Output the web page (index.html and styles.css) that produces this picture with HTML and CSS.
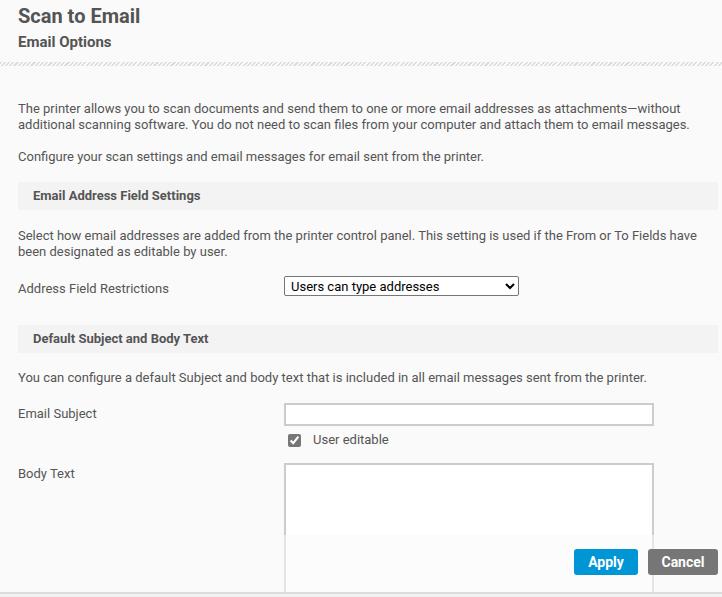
FILE: index.html
```html
<!DOCTYPE html>
<html lang="en">
<head>
<meta charset="utf-8">
<title>Scan to Email</title>
<link rel="stylesheet" href="styles.css">
</head>
<body>
<header class="page-head">
  <h1 class="page-title">Scan to Email</h1>
  <h2 class="page-subtitle">Email Options</h2>
</header>
<div class="hatch"></div>
<main class="content">
  <p class="text">The printer allows you to scan documents and send them to one or more email addresses as attachments—without additional scanning software. You do not need to scan files from your computer and attach them to email messages.</p>
  <p class="text">Configure your scan settings and email messages for email sent from the printer.</p>

  <section class="group">
    <h3 class="group-title">Email Address Field Settings</h3>
    <p class="text text-first">Select how email addresses are added from the printer control panel. This setting is used if the From or To Fields have been designated as editable by user.</p>
    <div class="row row-select">
      <label class="row-label" for="restrict">Address Field Restrictions</label>
      <select id="restrict" class="select">
        <option>Users can type addresses</option>
      </select>
    </div>
  </section>

  <section class="group group-second">
    <h3 class="group-title">Default Subject and Body Text</h3>
    <p class="text text-first">You can configure a default Subject and body text that is included in all email messages sent from the printer.</p>
    <div class="row row-subject">
      <label class="row-label row-label-input" for="subject">Email Subject</label>
      <input id="subject" class="input" type="text">
    </div>
    <div class="check-row">
      <input id="editable" class="check" type="checkbox" checked>
      <label for="editable" class="check-label">User editable</label>
    </div>
    <div class="row row-body">
      <label class="row-label row-label-input" for="body">Body Text</label>
      <textarea id="body" class="textarea"></textarea>
    </div>
  </section>
</main>
<footer class="actions">
  <button class="btn btn-apply" type="button">Apply</button>
  <button class="btn btn-cancel" type="button">Cancel</button>
</footer>
</body>
</html>
```
FILE: styles.css
```css
html, body {
  margin: 0;
  padding: 0;
}
body {
  background: #fafafa;
  color: #555555;
  font-family: Roboto, "Liberation Sans", sans-serif;
  font-size: 13px;
  line-height: 16px;
  overflow: hidden;
}
.page-head {
  padding: 3px 18px 10px;
}
.page-title {
  margin: 0;
  font-size: 20px;
  line-height: 26px;
  font-weight: 700;
  color: #545454;
}
.page-subtitle {
  margin: 3px 0 0;
  font-size: 15px;
  line-height: 20px;
  font-weight: 700;
  color: #545454;
}
.hatch {
  height: 4px;
  background: repeating-linear-gradient(135deg, #dcdcdc 0 1.5px, #fafafa 1.5px 3px);
}
.content {
  padding: 35px 4px 0 18px;
}
.text {
  margin: 0 0 16px;
}
.text-first {
  margin-top: 18px;
}
.group {
  margin-top: 17px;
}
.group-second {
  margin-top: 28px;
}
.group-title {
  margin: 0;
  height: 28px;
  line-height: 28px;
  padding-left: 15px;
  background: #f3f3f3;
  font-size: 13px;
  font-weight: 700;
  color: #555555;
}
.group-second .text-first {
  margin-top: 17px;
  margin-bottom: 17px;
}
.row {
  display: flex;
  align-items: flex-start;
}
.row-label {
  width: 266px;
  flex: none;
  margin-top: 5px;
}
.row-label-input {
  margin-top: 3px;
}
.select {
  width: 235px;
  height: 20px;
  margin: 0;
  padding: 0 2px;
  font-family: Roboto, "Liberation Sans", sans-serif;
  font-size: 13px;
  color: #000;
  background: #fff;
  border: 1px solid #767676;
  border-radius: 2px;
}
.input {
  box-sizing: border-box;
  width: 370px;
  height: 23px;
  margin: 0;
  border: 2px solid #cccccc;
  background: #fff;
  padding: 0 4px;
}
.check-row {
  display: flex;
  align-items: center;
  margin: 6px 0 0 266px;
  height: 16px;
}
.check {
  width: 13px;
  height: 13px;
  margin: 0 12px 0 4px;
  accent-color: #767676;
}
.row-body {
  margin-top: 15px;
}
.textarea {
  box-sizing: border-box;
  width: 370px;
  height: 150px;
  margin: 0;
  border: 2px solid #cccccc;
  background: #fff;
  resize: none;
}
.actions {
  position: fixed;
  left: 0;
  right: 0;
  bottom: 3px;
  height: 59px;
  box-sizing: border-box;
  padding: 14px 4px 0 0;
  display: flex;
  justify-content: flex-end;
  align-items: flex-start;
  gap: 10px;
  background: rgba(250, 250, 250, 0.55);
  border-bottom: 2px solid #dcdcdc;
  box-shadow: 0 3px 0 #f1f1f1;
}
.btn {
  height: 26px;
  border: 0;
  border-radius: 3px;
  color: #fff;
  font-family: Roboto, "Liberation Sans", sans-serif;
  font-size: 14px;
  font-weight: 700;
  padding: 0;
  cursor: pointer;
}
.btn-apply {
  width: 64px;
  background: #0096d6;
}
.btn-cancel {
  width: 70px;
  background: #767676;
}
```
